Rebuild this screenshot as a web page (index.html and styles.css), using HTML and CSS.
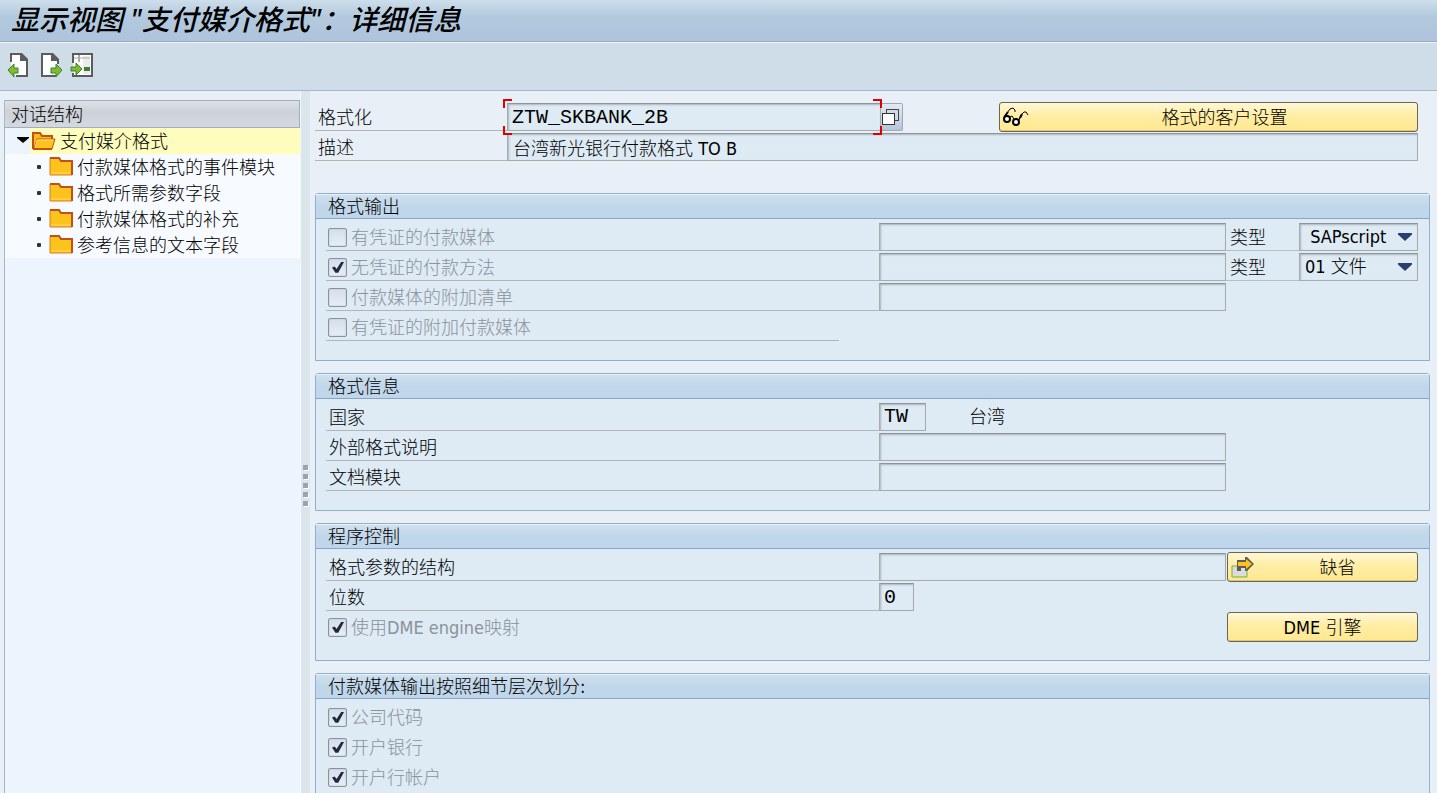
FILE: index.html
```html
<!DOCTYPE html>
<html lang="zh-CN">

<head>
    <meta charset="UTF-8">
    <meta name="viewport" content="width=device-width, initial-scale=1.0">
    <title>显示视图 "支付媒介格式"：详细信息</title>
    <link rel="stylesheet" href="styles.css">
</head>

<body>
    <header class="title-bar">
        <h1>显示视图 "支付媒介格式"：详细信息</h1>
    </header>

    <div class="toolbar">
        <button type="button" class="tool-button" aria-label="上一条目">
            <svg width="24" height="26" viewBox="0 0 24 26">
                <path d="M5 2h10l6 6v16H5z" fill="#fff" />
                <path d="M5 10V2h10M21 8v16H10" fill="none" stroke="#5c5c5c" stroke-width="2" />
                <path d="M14 1h2l6 6v2h-8z" fill="#5c5c5c" />
                <path d="M2 18l6-6v4h4v5H8v4z" fill="#82bc28" stroke="#38803c" stroke-width="1" />
            </svg>
        </button>
        <button type="button" class="tool-button" aria-label="下一条目">
            <svg width="24" height="26" viewBox="0 0 24 26">
                <path d="M4 2h10l6 6v16H4z" fill="#fff" />
                <path d="M18 24H4V2h10M20 8v4" fill="none" stroke="#5c5c5c" stroke-width="2" />
                <path d="M13 1h2l6 6v2h-8z" fill="#5c5c5c" />
                <path d="M24 18l-6-6v4h-5v5h5v4z" fill="#82bc28" stroke="#38803c" stroke-width="1" />
            </svg>
        </button>
        <button type="button" class="tool-button" aria-label="其他条目">
            <svg width="24" height="26" viewBox="0 0 24 26">
                <path d="M3 2h19v22H3z" fill="#fff" />
                <path d="M13 4h7v18h-7z" fill="#ececec" />
                <path d="M3 11V2h19v22H3v-3" fill="none" stroke="#5c5c5c" stroke-width="2" />
                <path d="M4 6h16" fill="none" stroke="#aaa" stroke-width="1" />
                <path d="M8 3h2v7H8z" fill="#aaa" />
                <path d="M14 15h6v4h-6z" fill="#38803c" />
                <path d="M1 15h5v-4l6 6-6 6v-4H1z" fill="#82bc28" stroke="#38803c" stroke-width="1" />
            </svg>
        </button>
    </div>

    <div class="workspace">
        <nav class="sidebar">
            <h2 class="sidebar-title">对话结构</h2>
            <ul class="tree">
                <li class="tree-root">
                    <svg class="tree-arrow" width="12" height="10" viewBox="0 0 12 10">
                        <path d="M0 1h12v1L6 7L0 2z" fill="#000" />
                    </svg>
                    <a href="#" class="active">
                        <svg width="24" height="20" viewBox="0 0 24 20">
                            <path d="M1 18V2h7l2 3h10v4" fill="#fcbc14" stroke="#c44d1c" stroke-width="2" />
                            <path d="M2 18L5 8h18l-3 10z" fill="#fcc31c" stroke="#c44d1c" stroke-width="1" />
                            <path d="M3 17l2-8h16" fill="none" stroke="#ffe07a" stroke-width="1" />
                            <path d="M1 18h19" stroke="#c44d1c" stroke-width="2" />
                        </svg>
                        <span>支付媒介格式</span>
                    </a>
                </li>
                <li class="tree-item">
                    <a href="#">
                        <svg width="24" height="20" viewBox="0 0 24 20">
                            <path d="M1 18V1h9l2 3h11v14z" fill="#fcc31c" stroke="#e27a18" stroke-width="1" />
                            <path d="M1 1h9l2 3h11v14" fill="none" stroke="#c44d1c" stroke-width="2" />
                            <path d="M2 16h19" stroke="#ffdc68" stroke-width="1" />
                        </svg>
                        <span>付款媒体格式的事件模块</span>
                    </a>
                </li>
                <li class="tree-item">
                    <a href="#">
                        <svg width="24" height="20" viewBox="0 0 24 20">
                            <path d="M1 18V1h9l2 3h11v14z" fill="#fcc31c" stroke="#e27a18" stroke-width="1" />
                            <path d="M1 1h9l2 3h11v14" fill="none" stroke="#c44d1c" stroke-width="2" />
                            <path d="M2 16h19" stroke="#ffdc68" stroke-width="1" />
                        </svg>
                        <span>格式所需参数字段</span>
                    </a>
                </li>
                <li class="tree-item">
                    <a href="#">
                        <svg width="24" height="20" viewBox="0 0 24 20">
                            <path d="M1 18V1h9l2 3h11v14z" fill="#fcc31c" stroke="#e27a18" stroke-width="1" />
                            <path d="M1 1h9l2 3h11v14" fill="none" stroke="#c44d1c" stroke-width="2" />
                            <path d="M2 16h19" stroke="#ffdc68" stroke-width="1" />
                        </svg>
                        <span>付款媒体格式的补充</span>
                    </a>
                </li>
                <li class="tree-item">
                    <a href="#">
                        <svg width="24" height="20" viewBox="0 0 24 20">
                            <path d="M1 18V1h9l2 3h11v14z" fill="#fcc31c" stroke="#e27a18" stroke-width="1" />
                            <path d="M1 1h9l2 3h11v14" fill="none" stroke="#c44d1c" stroke-width="2" />
                            <path d="M2 16h19" stroke="#ffdc68" stroke-width="1" />
                        </svg>
                        <span>参考信息的文本字段</span>
                    </a>
                </li>
            </ul>
        </nav>

        <div class="splitter">
            <span></span>
            <span></span>
            <span></span>
            <span></span>
            <span></span>
        </div>

        <main class="main-content">
            <div class="head-form">
                <div class="head-row">
                    <label class="field-label" for="format">格式化</label>
                    <div class="focus-field">
                        <input type="text" id="format" class="field code" value="ZTW_SKBANK_2B" readonly>
                        <span class="corner top-left"></span>
                        <span class="corner top-right"></span>
                        <span class="corner bottom-left"></span>
                        <span class="corner bottom-right"></span>
                    </div>
                    <button type="button" class="match-button" aria-label="选择格式">
                        <svg width="18" height="18" viewBox="0 0 18 18" shape-rendering="crispEdges">
                            <path d="M5 1h12v11H5z" fill="#d4dae4" stroke="#444" stroke-width="1" />
                            <path d="M1 5h12v11H1z" fill="#fff" stroke="#333" stroke-width="1" />
                        </svg>
                    </button>
                    <button type="button" class="push-button customer">
                        <svg width="26" height="20" viewBox="0 0 26 20" fill="none" stroke="#000" stroke-width="1">
                            <path d="M1 10l3-4 3-4 3-1 2 2v2M16 13l2-5 3-3 2 0 2 3" />
                            <path d="M2 9l3-4M17 11l2-4" stroke-width="2" />
                            <circle cx="4" cy="12" r="3" fill="#fff" stroke-width="2" />
                            <circle cx="13" cy="15" r="3" fill="#fff" stroke-width="2" />
                            <path d="M7 10l2-1 2 3" />
                        </svg>
                        <span>格式的客户设置</span>
                    </button>
                </div>
                <div class="head-row">
                    <label class="field-label" for="description">描述</label>
                    <input type="text" id="description" class="field" value="台湾新光银行付款格式 TO B" readonly>
                </div>
            </div>

            <section class="panel">
                <h2>格式输出</h2>
                <div class="panel-body">
                    <div class="check-label">
                        <input type="checkbox" id="out1" disabled>
                        <label for="out1">有凭证的付款媒体</label>
                    </div>
                    <input type="text" class="field" aria-label="有凭证的付款媒体" readonly>
                    <label class="type-label" for="type1">类型</label>
                    <div class="select-box">
                        <select id="type1">
                            <option>&nbsp;SAPscript</option>
                        </select>
                    </div>

                    <div class="check-label">
                        <input type="checkbox" id="out2" checked disabled>
                        <label for="out2">无凭证的付款方法</label>
                    </div>
                    <input type="text" class="field" aria-label="无凭证的付款方法" readonly>
                    <label class="type-label" for="type2">类型</label>
                    <div class="select-box">
                        <select id="type2">
                            <option>01 文件</option>
                        </select>
                    </div>

                    <div class="check-label">
                        <input type="checkbox" id="out3" disabled>
                        <label for="out3">付款媒体的附加清单</label>
                    </div>
                    <input type="text" class="field" aria-label="付款媒体的附加清单" readonly>

                    <div class="check-label short">
                        <input type="checkbox" id="out4" disabled>
                        <label for="out4">有凭证的附加付款媒体</label>
                    </div>
                </div>
            </section>

            <section class="panel">
                <h2>格式信息</h2>
                <div class="panel-body">
                    <label class="field-label" for="country">国家</label>
                    <div class="country">
                        <input type="text" id="country" class="field code" value="TW" readonly>
                        <span>台湾</span>
                    </div>
                    <label class="field-label" for="external">外部格式说明</label>
                    <input type="text" id="external" class="field" readonly>
                    <label class="field-label" for="document">文档模块</label>
                    <input type="text" id="document" class="field" readonly>
                </div>
            </section>

            <section class="panel">
                <h2>程序控制</h2>
                <div class="panel-body">
                    <label class="field-label" for="structure">格式参数的结构</label>
                    <input type="text" id="structure" class="field" readonly>
                    <button type="button" class="push-button side">
                        <svg width="24" height="24" viewBox="0 0 24 24">
                            <path d="M1 11h15v11H1z" fill="#dcdcdc" stroke="#78b428" stroke-width="1" />
                            <path d="M6 5h8V2h2l7 7-7 7h-2v-3h-4v3H6z" fill="#5c5c5c" />
                            <path d="M7 7h8V4l6 5-6 5v-3H7z" fill="#fcc31c" />
                        </svg>
                        <span>缺省</span>
                    </button>

                    <label class="field-label" for="digits">位数</label>
                    <input type="text" id="digits" class="field code digits" value="0" readonly>

                    <div class="check-label plain">
                        <input type="checkbox" id="engine" checked disabled>
                        <label for="engine">使用DME engine映射</label>
                    </div>
                    <button type="button" class="push-button side"><span>DME 引擎</span></button>
                </div>
            </section>

            <section class="panel open">
                <h2>付款媒体输出按照细节层次划分:</h2>
                <div class="panel-body">
                    <div class="check-label plain">
                        <input type="checkbox" id="level1" checked disabled>
                        <label for="level1">公司代码</label>
                    </div>
                    <div class="check-label plain">
                        <input type="checkbox" id="level2" checked disabled>
                        <label for="level2">开户银行</label>
                    </div>
                    <div class="check-label plain">
                        <input type="checkbox" id="level3" checked disabled>
                        <label for="level3">开户行帐户</label>
                    </div>
                </div>
            </section>
        </main>
    </div>
</body>

</html>
```
FILE: styles.css
```css
* {
    margin: 0;
    padding: 0;
    box-sizing: border-box;
}

body {
    display: flex;
    flex-direction: column;
    min-height: 100vh;
    background-color: #e8eff6;
    color: #000;
    font-family: "DejaVu Sans Condensed", "Noto Sans CJK SC", sans-serif;
    font-size: 18px;
    font-weight: 300;
    line-height: 26px;
}

input,
select,
button {
    font: inherit;
    color: inherit;
}

svg {
    display: block;
    flex: none;
}

.title-bar {
    height: 42px;
    padding-left: 11px;
    background: linear-gradient(to bottom, #cddeeb, #b2c9de 40%, #adc4dc);
    border-bottom: 1px solid #98aabd;
}

.title-bar h1 {
    font-family: "Noto Sans", "Noto Sans CJK SC", sans-serif;
    font-size: 28px;
    font-weight: 500;
    font-style: italic;
    line-height: 38px;
}

.toolbar {
    display: flex;
    align-items: center;
    gap: 8px;
    height: 49px;
    padding: 0 6px 4px;
    background-color: #cfdde8;
    border-top: 1px solid #f0f5fa;
    border-bottom: 1px solid #a5b7ca;
}

.tool-button {
    background: none;
    border: none;
    cursor: pointer;
}

.workspace {
    flex: 1;
    display: flex;
    padding-left: 4px;
}

/* tree */
.sidebar {
    width: 296px;
    margin-top: 9px;
    background-color: #ecf4fd;
    border-left: 1px solid #a9b7c6;
}

.sidebar-title {
    height: 28px;
    padding-left: 6px;
    background: linear-gradient(to bottom, #dee2e6, #cdd2d9 40%, #d4d9df);
    border: 1px solid #a0afc0;
    border-left: none;
    font-size: 18px;
    font-weight: 300;
    line-height: 28px;
}

.tree {
    list-style: none;
    background-color: #f7fbff;
}

.tree li {
    display: flex;
    align-items: center;
    height: 26px;
}

.tree a {
    flex: 1;
    display: flex;
    align-items: center;
    gap: 4px;
    height: 26px;
    color: #000;
    text-decoration: none;
    white-space: nowrap;
}

.tree a span {
    padding-top: 2px;
}

.tree .active {
    padding-left: 2px;
    background-color: #fffdbd;
}

.tree-root {
    background-color: #ecf4fd;
}

.tree-arrow {
    margin: 0 1px 0 12px;
}

.tree-item::before {
    content: "";
    width: 4px;
    height: 4px;
    margin: 0 8px 0 32px;
    background-color: #333;
    border-radius: 1px;
}

.splitter {
    width: 10px;
    display: flex;
    flex-direction: column;
    align-items: center;
    justify-content: center;
    gap: 4px;
    padding-top: 86px;
    background-color: #dbe5ec;
    border-left: 1px solid #f4f8fb;
}

.splitter span {
    width: 5px;
    height: 5px;
    background-color: #98a3b3;
    box-shadow: 1px 1px 0 #fff;
}

.main-content {
    flex: 1;
    display: flex;
    flex-direction: column;
    gap: 12px;
    min-width: 0;
    padding: 12px 7px 0 5px;
}

/* fields */
.field {
    width: 100%;
    min-width: 0;
    height: 28px;
    padding: 0 5px;
    background-color: #deeaf4;
    border: 1px solid #a8abae;
    border-top-color: #8f9498;
    box-shadow: inset 1px 1px 2px #a9b5bd;
    outline: none;
}

.code {
    padding: 0 4px;
    font-family: "Liberation Mono", monospace;
    font-size: 20px;
}

.field-label {
    height: 28px;
    padding-left: 3px;
    border-bottom: 1px solid #b2b5b8;
    line-height: 30px;
}

.head-form {
    display: flex;
    flex-direction: column;
    gap: 2px;
    margin-bottom: 20px;
    padding-right: 12px;
}

.head-row {
    display: flex;
    align-items: center;
    height: 28px;
}

.head-row .field-label {
    flex: none;
    width: 192px;
}

.focus-field {
    position: relative;
    flex: 378;
}

.focus-field .field {
    display: block;
}

.corner {
    position: absolute;
    width: 9px;
    height: 9px;
    border: 0 solid #e00000;
}

.top-left {
    top: -4px;
    left: -4px;
    border-width: 2px 0 0 2px;
}

.top-right {
    top: -4px;
    right: -1px;
    border-width: 2px 2px 0 0;
}

.bottom-left {
    bottom: -4px;
    left: -4px;
    border-width: 0 0 2px 2px;
}

.bottom-right {
    bottom: -4px;
    right: -1px;
    border-width: 0 2px 2px 0;
}

.match-button {
    display: flex;
    align-items: center;
    width: 22px;
    height: 28px;
    background: linear-gradient(to bottom, #e4eaf3, #b4c4dc);
    border: 1px solid #a0a8b4;
    border-left: none;
    border-radius: 0 2px 2px 0;
}

.push-button {
    display: flex;
    align-items: center;
    height: 30px;
    padding: 0 3px;
    background: linear-gradient(to bottom, #fff8d8, #ffeea8 40%, #ffe88f);
    border: 1px solid #6b6650;
    border-radius: 3px;
    box-shadow: inset 0 -1px 0 #d9c684;
    cursor: pointer;
}

.push-button svg {
    margin-right: 6px;
}

.push-button span {
    flex: 1;
    padding-top: 2px;
    text-align: center;
}

.customer {
    flex: 415;
    margin-left: 96px;
}

.side {
    grid-column: 3 / 5;
    align-self: center;
    margin-left: 1px;
}

/* group boxes */
.panel {
    background-color: #deeaf4;
    border: 1px solid #8fafd0;
    border-radius: 3px 3px 0 0;
}

.panel h2 {
    height: 25px;
    padding-left: 12px;
    background: linear-gradient(to bottom, #d0e0ee, #c0d6ea 50%, #c0d6ea);
    border-top: 1px solid #eaf2f9;
    border-bottom: 1px solid #86a5c8;
    font-size: 18px;
    font-weight: 300;
    line-height: 23px;
}

.panel-body {
    display: grid;
    grid-template-columns: 553fr 347fr 73px 119px;
    grid-auto-rows: 28px;
    row-gap: 2px;
    padding: 4px 11px 19px 10px;
}

.panel-body .field-label,
.check-label {
    grid-column: 1;
}

.open {
    flex: 1;
    border-bottom: none;
}

.open .panel-body {
    padding-bottom: 0;
}

.check-label {
    display: flex;
    align-items: center;
    gap: 4px;
    padding: 1px 0 0 2px;
    border-bottom: 1px solid #b2b5b8;
    color: #8b9299;
}

.check-label label {
    line-height: 28px;
    padding-top: 1px;
}

.short {
    grid-column: 1 / 3;
    width: 57%;
}

.plain {
    border-bottom-color: transparent;
}

.check-label input {
    appearance: none;
    flex: none;
    width: 19px;
    height: 19px;
    padding: 3px;
    background: linear-gradient(to bottom, #d4dfec, #e6eef6);
    border: 1px solid #8c9298;
    border-radius: 2px;
    box-shadow: inset 0 0 2px #b5bec8;
}

.check-label input:checked::before {
    content: "";
    display: block;
    width: 12px;
    height: 12px;
    background-color: #26283f;
    clip-path: polygon(0 50%, 22% 42%, 38% 62%, 76% 4%, 100% 4%, 52% 94%, 28% 94%);
}

.type-label {
    padding-left: 4px;
    border-bottom: 1px solid #b2c0cc;
    line-height: 30px;
}

.select-box {
    position: relative;
}

.select-box::after {
    content: "";
    position: absolute;
    top: 10px;
    right: 6px;
    width: 14px;
    height: 8px;
    background-color: #2b3f6e;
    clip-path: polygon(0 0, 100% 0, 100% 20%, 50% 100%, 0 20%);
    pointer-events: none;
}

.select-box select {
    appearance: none;
    width: 100%;
    height: 28px;
    padding: 0 24px 0 5px;
    background-color: #deeaf4;
    border: 1px solid #a8abae;
    border-top-color: #8f9498;
    box-shadow: inset 1px 1px 2px #a9b5bd;
    outline: none;
}

.country {
    display: flex;
    align-items: center;
    gap: 43px;
    line-height: 28px;
}

.country .field {
    width: 47px;
}

.digits {
    width: 35px;
}
```
